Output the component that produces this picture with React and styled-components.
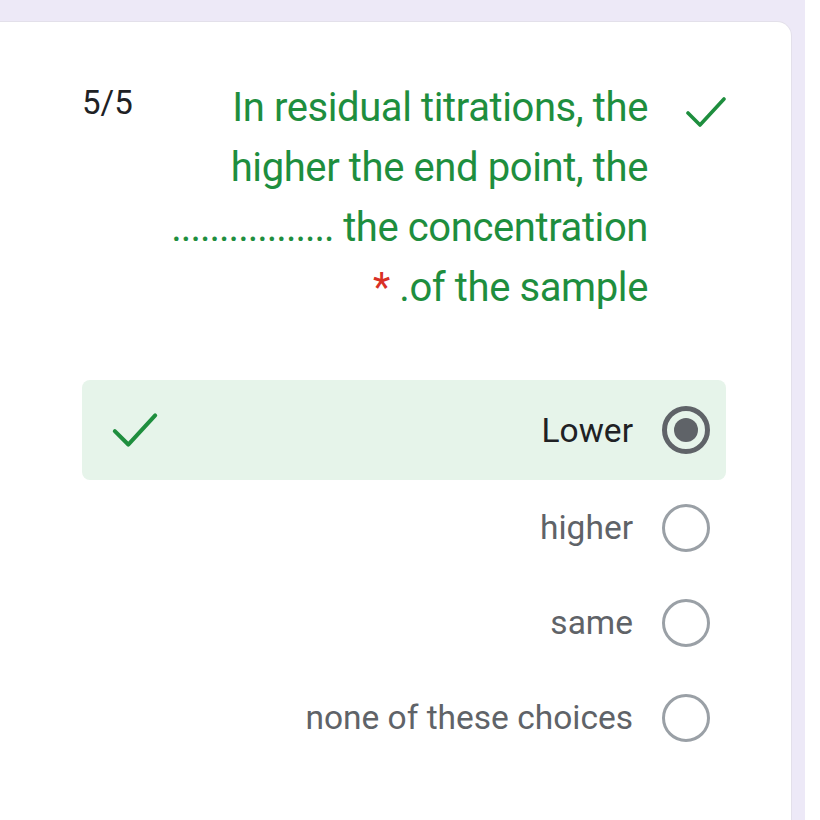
import React from 'react'
import styled, { createGlobalStyle } from 'styled-components'

const Global = createGlobalStyle`
  html, body {
    margin: 0;
    padding: 0;
    background: #ffffff;
  }
  body {
    font-family: Roboto, "Noto Sans", "Liberation Sans", sans-serif;
  }
`

const Page = styled.div`
  width: 805px;
  height: 820px;
  box-sizing: border-box;
  padding: 22px 14px 0 0;
  background-color: #ede9f7;
  overflow: hidden;
`

const Card = styled.div`
  height: 100%;
  box-sizing: border-box;
  background: #ffffff;
  border-radius: 0 14px 0 0;
  box-shadow: 0 0 0 1px #e3e0ea;
  padding: 56px 65px 0 82px;
`

const Header = styled.div`
  display: flex;
  align-items: flex-start;
`

const Points = styled.div`
  font-size: 33px;
  line-height: 60px;
  color: #202124;
  margin-top: -5px;
`

const Question = styled.div`
  flex: 1;
  direction: rtl;
  text-align: right;
  font-size: 40px;
  line-height: 60px;
  color: #1e8e3e;
  letter-spacing: -0.4px;
`

// blank to fill in, kept left-to-right inside the rtl paragraph
const Blank = styled.span`
  direction: ltr;
  unicode-bidi: embed;
  letter-spacing: -1px;
`

const Required = styled.span`
  color: #d93025;
`

const HeaderCheck = styled.div`
  width: 40px;
  margin-left: 38px;
  padding-top: 18px;
  display: flex;
`

const Options = styled.div`
  margin-top: 62px;
  display: flex;
  flex-direction: column;
`

const Row = styled.div`
  height: ${p => (p.$picked ? '100px' : '95px')};
  display: flex;
  align-items: center;
  justify-content: flex-end;
  padding: 0 16px 0 27px;
  border-radius: 8px;
  background: ${p => (p.$picked ? '#e6f4ea' : 'transparent')};
`

const RowCheck = styled.div`
  margin-right: auto;
  display: flex;
`

const Label = styled.span`
  font-size: 33.5px;
  color: ${p => (p.$picked ? '#202124' : '#5f6368')};
  margin-right: 29px;
`

const Radio = styled.span`
  width: 48px;
  height: 48px;
  box-sizing: border-box;
  border-radius: 50%;
  border: ${p => (p.$picked ? '5px solid #5f6368' : '3.5px solid #9aa0a6')};
  display: flex;
  align-items: center;
  justify-content: center;

  &::after {
    content: '';
    display: ${p => (p.$picked ? 'block' : 'none')};
    width: 24px;
    height: 24px;
    border-radius: 50%;
    background: #5f6368;
  }
`

function Check({ w, h }) {
  return (
    <svg width={w} height={h} viewBox="0 0 40 33" fill="none">
      <polyline
        points="2,17 14,29 38,3"
        stroke="#1e8e3e"
        strokeWidth="3.6"
        strokeLinecap="round"
        strokeLinejoin="round"
      />
    </svg>
  )
}

const options = [
  { text: 'Lower', picked: true },
  { text: 'higher' },
  { text: 'same' },
  { text: 'none of these choices' },
]

export default function App() {
  return (
    <>
      <Global />
      <Page>
        <Card>
          <Header>
            <Points>5/5</Points>
            <Question>
              In residual titrations, the<br />
              higher the end point, the<br />
              <Blank>.................</Blank> the concentration<br />
              of the sample. <Required>*</Required>
            </Question>
            <HeaderCheck>
              <Check w={40} h={33} />
            </HeaderCheck>
          </Header>
          <Options>
            {options.map(o => (
              <Row key={o.text} $picked={o.picked}>
                {o.picked && (
                  <RowCheck>
                    <Check w={52} h={37} />
                  </RowCheck>
                )}
                <Label $picked={o.picked}>{o.text}</Label>
                <Radio $picked={o.picked} />
              </Row>
            ))}
          </Options>
        </Card>
      </Page>
    </>
  )
}
